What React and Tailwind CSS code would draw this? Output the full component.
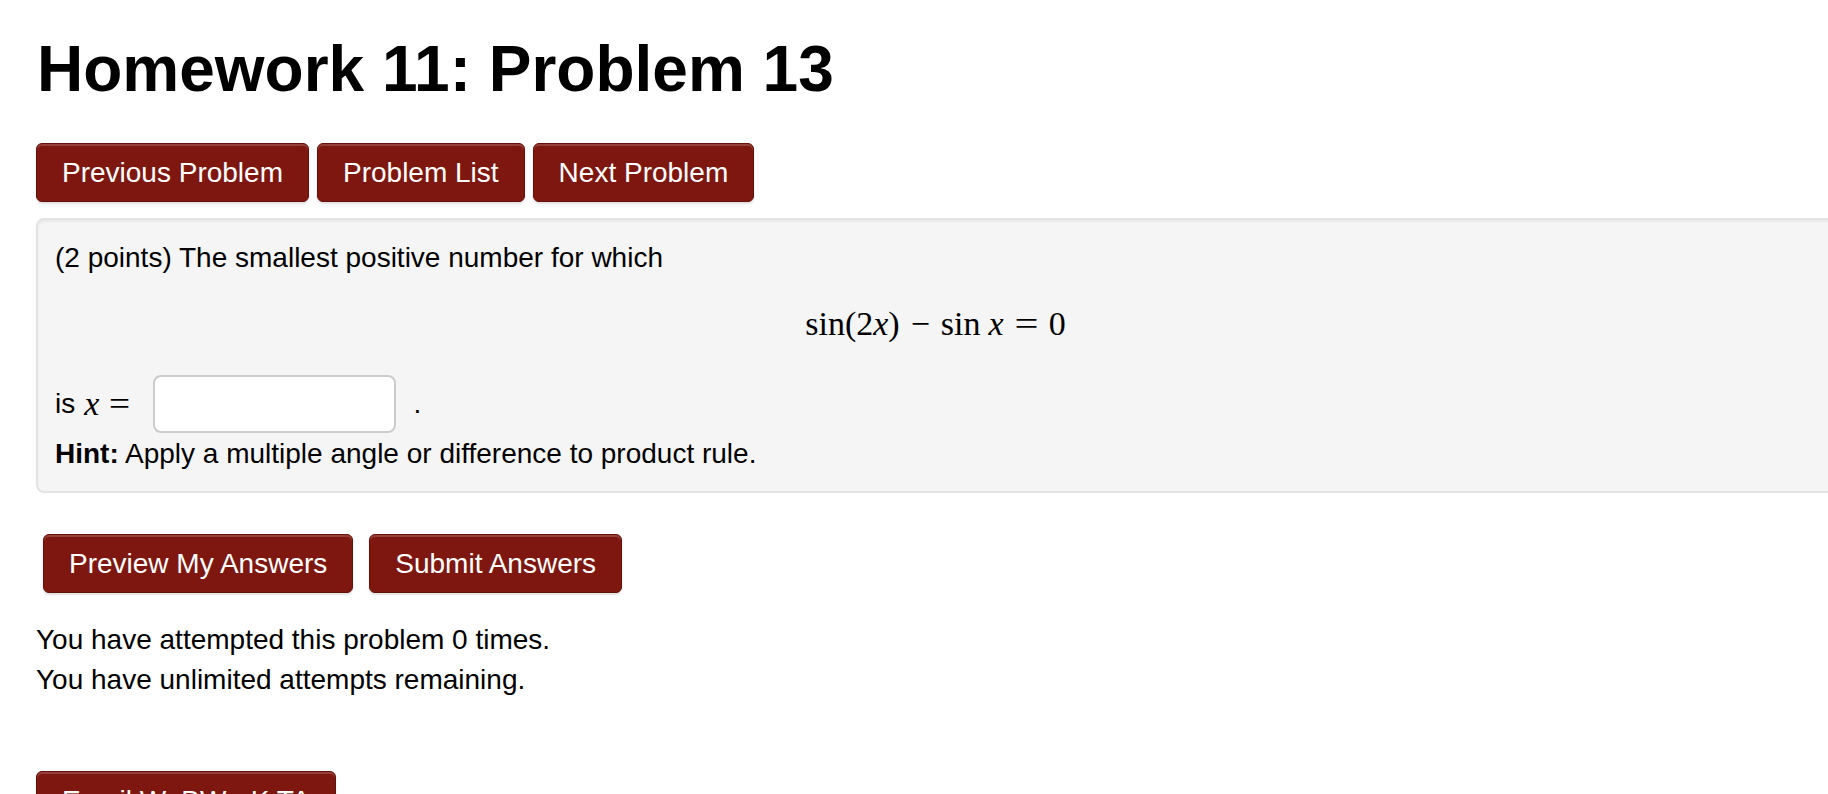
const sans = { fontFamily: '"Liberation Sans", Arial, Helvetica, sans-serif' };
const serif = { fontFamily: '"Liberation Serif", "Times New Roman", serif' };

function RedButton({ children, className = '' }) {
  return (
    <button
      className={`h-[59px] px-[25px] rounded-[6px] border border-[#651009] bg-[#7e1710] text-white text-[28px] leading-[40px] shadow-[inset_0_2px_0_rgba(255,255,255,0.18),0_2px_2px_rgba(0,0,0,0.12)] ${className}`}
    >
      {children}
    </button>
  );
}

export default function App() {
  return (
    <div className="w-full h-[794px] overflow-hidden bg-white text-black" style={sans}>
      <div className="pl-[36px] pt-[34px]">
        <h1 className="pl-[1px] text-[64px] leading-[70px] font-bold">Homework 11: Problem 13</h1>

        {/* Navigation */}
        <div className="flex gap-[8px] mt-[39px]">
          <RedButton>Previous Problem</RedButton>
          <RedButton>Problem List</RedButton>
          <RedButton>Next Problem</RedButton>
        </div>

        {/* Problem box */}
        <div className="mt-[16px] w-[1799px] rounded-[8px] border-2 border-[#e3e3e3] bg-[#f5f5f5] shadow-[inset_0_2px_2px_rgba(0,0,0,0.05)] pt-[18px] pb-[17px] pl-[17px] pr-[17px] text-[28px] leading-[40px]">
          <p>(2 points) The smallest positive number for which</p>

          <div className="mt-[26px] mb-[30px] flex justify-center items-baseline text-[34px] leading-[40px]" style={serif}>
            <span>sin(2<i>x</i>)</span>
            <span className="mx-[11px]">−</span>
            <span>sin</span>
            <i className="ml-[8px]">x</i>
            <span className="mx-[13px] scale-x-125">=</span>
            <span>0</span>
          </div>

          <div className="flex items-center h-[60px]">
            <span>is</span>
            <span className="flex items-baseline text-[34px]" style={serif}>
              <i className="ml-[9px]">x</i>
              <span className="ml-[11px] scale-x-110">=</span>
            </span>
            <input
              type="text"
              className="ml-[23px] w-[243px] h-[58px] rounded-[8px] border-2 border-[#cccccc] bg-white outline-none"
            />
            <span className="ml-[18px]">.</span>
          </div>

          <p>
            <b>Hint:</b> Apply a multiple angle or difference to product rule.
          </p>
        </div>

        {/* Submit */}
        <div className="flex gap-[16px] mt-[41px] ml-[7px]">
          <RedButton>Preview My Answers</RedButton>
          <RedButton>Submit Answers</RedButton>
        </div>

        <div className="mt-[27px] text-[28px] leading-[40px]">
          <p>You have attempted this problem 0 times.</p>
          <p>You have unlimited attempts remaining.</p>
        </div>

        <div className="mt-[71px]">
          <RedButton>Email WeBWorK TA</RedButton>
        </div>
      </div>
    </div>
  );
}
